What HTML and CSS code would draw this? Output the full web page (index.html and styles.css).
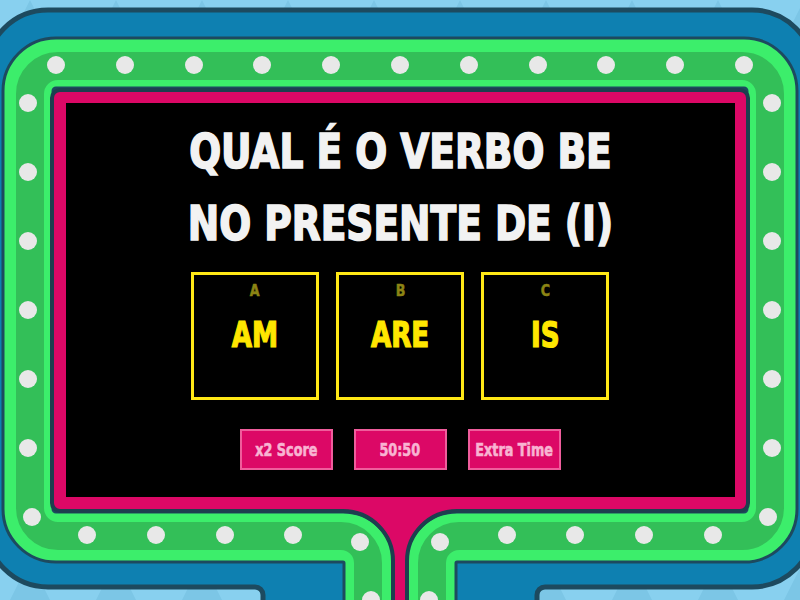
FILE: index.html
```html
<!DOCTYPE html>
<html lang="pt">
<head>
<meta charset="utf-8">
<title>Quiz</title>
<link rel="stylesheet" href="styles.css">
</head>
<body>
<div class="stage">
  <svg class="frame" width="800" height="600" viewBox="0 0 800 600" aria-hidden="true">
    <defs>
      <pattern id="tri" width="86" height="40" patternUnits="userSpaceOnUse">
        <polygon points="10,40 30,0 50,40" fill="#7cc6e6"/>
      </pattern>
    </defs>
    <rect x="0" y="0" width="800" height="600" fill="#88d0ef"/>
    <rect x="0" y="0" width="800" height="600" fill="url(#tri)"/>
    <path class="blue" d="M -14 72 A 62 62 0 0 1 48 10 H 752 A 62 62 0 0 1 814 72 V 525 A 62 62 0 0 1 752 587 H 545 A 8 8 0 0 0 537 595 V 640 H 263 V 595 A 8 8 0 0 0 255 587 H 48 A 62 62 0 0 1 -14 525 Z"/>
    <path class="g-dark" d="M 369 640 V 563 A 26 26 0 0 0 343 537 H 56 A 28 28 0 0 1 28 509 V 91 A 28 28 0 0 1 56 63 H 744 A 28 28 0 0 1 772 91 V 509 A 28 28 0 0 1 744 537 H 457 A 26 26 0 0 0 431 563 V 640"/>
    <path class="g-bright" d="M 369 640 V 563 A 26 26 0 0 0 343 537 H 56 A 28 28 0 0 1 28 509 V 91 A 28 28 0 0 1 56 63 H 744 A 28 28 0 0 1 772 91 V 509 A 28 28 0 0 1 744 537 H 457 A 26 26 0 0 0 431 563 V 640"/>
    <path class="g-mid" d="M 368 640 V 563 A 27 27 0 0 0 341 536 H 58 A 28 28 0 0 1 30 508 V 94 A 28 28 0 0 1 58 66 H 742 A 28 28 0 0 1 770 94 V 508 A 28 28 0 0 1 742 536 H 459 A 27 27 0 0 0 432 563 V 640"/>
    <g class="dots">
      <circle cx="56" cy="65" r="9"/><circle cx="125" cy="65" r="9"/><circle cx="194" cy="65" r="9"/>
      <circle cx="262" cy="65" r="9"/><circle cx="331" cy="65" r="9"/><circle cx="400" cy="65" r="9"/>
      <circle cx="469" cy="65" r="9"/><circle cx="538" cy="65" r="9"/><circle cx="606" cy="65" r="9"/>
      <circle cx="675" cy="65" r="9"/><circle cx="744" cy="65" r="9"/>
      <circle cx="28" cy="103" r="9"/><circle cx="28" cy="172" r="9"/><circle cx="28" cy="241" r="9"/>
      <circle cx="28" cy="310" r="9"/><circle cx="28" cy="379" r="9"/><circle cx="28" cy="448" r="9"/>
      <circle cx="32" cy="517" r="9"/>
      <circle cx="772" cy="103" r="9"/><circle cx="772" cy="172" r="9"/><circle cx="772" cy="241" r="9"/>
      <circle cx="772" cy="310" r="9"/><circle cx="772" cy="379" r="9"/><circle cx="772" cy="448" r="9"/>
      <circle cx="768" cy="517" r="9"/>
      <circle cx="87" cy="535" r="9"/><circle cx="156" cy="535" r="9"/><circle cx="225" cy="535" r="9"/>
      <circle cx="293" cy="535" r="9"/><circle cx="360" cy="542" r="9"/><circle cx="371" cy="600" r="9"/>
      <circle cx="440" cy="542" r="9"/><circle cx="429" cy="600" r="9"/><circle cx="507" cy="535" r="9"/>
      <circle cx="575" cy="535" r="9"/><circle cx="644" cy="535" r="9"/><circle cx="713" cy="535" r="9"/>
    </g>
    <path class="pink" d="M 60 90 H 740 A 8 8 0 0 1 748 98 V 503 A 8 8 0 0 1 740 511 H 457 A 50 50 0 0 0 407 561 V 640 H 393 V 561 A 50 50 0 0 0 343 511 H 60 A 8 8 0 0 1 52 503 V 98 A 8 8 0 0 1 60 90 Z"/>
    <rect x="66" y="103" width="669" height="394" fill="#000"/>
  </svg>

  <main class="screen">
    <h1 class="question">QUAL É O VERBO BE<br>NO PRESENTE DE (I)</h1>
    <div class="answers">
      <div class="answer"><span class="letter">A</span><span class="text">AM</span></div>
      <div class="answer"><span class="letter">B</span><span class="text">ARE</span></div>
      <div class="answer"><span class="letter">C</span><span class="text">IS</span></div>
    </div>
    <div class="powerups">
      <button class="power"><span class="label">x2 Score</span></button>
      <button class="power"><span class="label">50:50</span></button>
      <button class="power"><span class="label">Extra Time</span></button>
    </div>
  </main>
</div>
</body>
</html>
```

FILE: styles.css
```css
html, body {
  margin: 0;
  padding: 0;
  background: #88d0ef;
}

.stage {
  display: grid;
  width: 800px;
  height: 600px;
  overflow: hidden;
}

.frame {
  grid-area: 1 / 1;
  display: block;
}

.blue {
  fill: #0e80b1;
  stroke: #1d4a5f;
  stroke-width: 5;
}

.g-dark {
  fill: none;
  stroke: #1d4a5f;
  stroke-width: 53;
  stroke-linejoin: round;
}

.g-bright {
  fill: none;
  stroke: #3cee6b;
  stroke-width: 47;
  stroke-linejoin: round;
}

.g-mid {
  fill: none;
  stroke: #33bf58;
  stroke-width: 28;
  stroke-linejoin: round;
}

.dots circle {
  fill: #e8e8e8;
}

.pink {
  fill: #dc0866;
  stroke: #1d3f4f;
  stroke-width: 4;
}

.screen {
  grid-area: 1 / 1;
  display: flex;
  flex-direction: column;
  align-items: center;
  padding-top: 115px;
  font-family: "Liberation Sans Narrow", "DejaVu Sans Condensed", "Liberation Sans", sans-serif;
  font-weight: 700;
}

.question {
  margin: 0;
  font-size: 48px;
  line-height: 72px;
  font-weight: 700;
  color: #f2f2f2;
  -webkit-text-stroke: 1.6px #f2f2f2;
  text-align: center;
  white-space: nowrap;
  transform: scaleX(0.87);
}

.answers {
  display: flex;
  gap: 17px;
  margin-top: 13px;
}

.answer {
  box-sizing: border-box;
  width: 128px;
  height: 128px;
  border: 3px solid #ffe816;
  display: flex;
  flex-direction: column;
  align-items: center;
  padding-top: 6px;
}

.letter {
  font-size: 16px;
  line-height: 20px;
  color: #8c8414;
  -webkit-text-stroke: 0.5px #8c8414;
  transform: scaleX(0.88);
}

.text {
  margin-top: 14px;
  font-size: 35px;
  line-height: 40px;
  color: #ffe600;
  -webkit-text-stroke: 1.2px #ffe600;
  transform: scaleX(0.83);
}

.powerups {
  display: flex;
  gap: 21px;
  margin-top: 29px;
}

.power {
  box-sizing: border-box;
  width: 93px;
  height: 41px;
  padding: 0;
  background: #dc0866;
  border: 2px solid #ef5d9c;
  color: #f8b4d2;
  font-family: inherit;
  font-weight: 700;
  font-size: 18px;
  white-space: nowrap;
  display: flex;
  align-items: center;
  justify-content: center;
  overflow: visible;
}

.label {
  display: inline-block;
  -webkit-text-stroke: 0.6px #f8b4d2;
  transform: scaleX(0.79);
}
```
